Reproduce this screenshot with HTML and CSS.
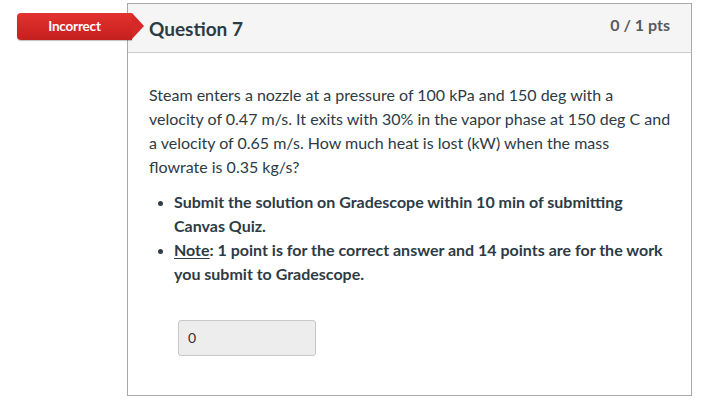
FILE: index.html
```html
<!DOCTYPE html>
<html>
<head>
<meta charset="utf-8">
<link rel="stylesheet" href="styles.css">
</head>
<body>
<div class="page">
  <div class="card">
    <div class="badge">Incorrect</div>
    <div class="header">
      <h2 class="title">Question 7</h2>
      <div class="pts">0 / 1 pts</div>
    </div>
    <div class="body">
      <p class="text">Steam enters a nozzle at a pressure of 100 kPa and 150 deg with a velocity of 0.47 m/s. It exits with 30% in the vapor phase at 150 deg C and a velocity of 0.65 m/s. How much heat is lost (kW) when the mass flowrate is 0.35 kg/s?</p>
      <ul class="list">
        <li>Submit the solution on Gradescope within 10 min of submitting Canvas Quiz.</li>
        <li><span class="u">Note</span>: 1 point is for the correct answer and 14 points are for the work you submit to Gradescope.</li>
      </ul>
      <div class="answer">0</div>
    </div>
  </div>
</div>
</body>
</html>
```

FILE: styles.css
```css
html, body {
  margin: 0;
  padding: 0;
  background: #ffffff;
}
body {
  font-family: Lato, "Liberation Sans", sans-serif;
  color: #2d3b45;
}
.page {
  padding: 3px 0 0 127px;
}
.card {
  position: relative;
  width: 563px;
  height: 391px;
  border: 1px solid #a9a9a9;
  box-sizing: content-box;
}
.badge {
  position: absolute;
  left: -111px;
  top: 9px;
  width: 115px;
  height: 27px;
  background: linear-gradient(#e3322f, #c41f1e);
  border-radius: 4px 0 0 4px;
  color: #fff;
  font-size: 13.5px;
  font-weight: 700;
  line-height: 26px;
  box-sizing: border-box;
  text-align: center;
  letter-spacing: -0.2px;
  box-shadow: 0 1px 1px rgba(0,0,0,0.25);
}
.badge::after {
  content: "";
  position: absolute;
  right: -12px;
  top: 0;
  border-top: 13.5px solid transparent;
  border-bottom: 13.5px solid transparent;
  border-left: 12px solid #d42927;
}
.header {
  display: flex;
  align-items: center;
  justify-content: space-between;
  height: 48px;
  background: #f5f5f5;
  border-bottom: 1px solid #c7cdd1;
  padding: 0 21px 0 21px;
}
.title {
  margin: 0;
  font-size: 19px;
  font-weight: 700;
  color: #2d3b45;
}
.pts {
  font-size: 16px;
  font-weight: 700;
  color: #555a5e;
  padding-bottom: 8px;
}
.body {
  padding: 30px 20px 0 21px;
  font-size: 16px;
  line-height: 24px;
}
.text {
  margin: 0;
}
.list {
  margin: 11px 0 0 0;
  padding-left: 25px;
  font-weight: 700;
}
.list li::marker {
  font-weight: 400;
  font-size: 14px;
}
.u {
  text-decoration: underline;
  text-underline-offset: 2px;
}
.answer {
  margin: 34px 0 0 29px;
  width: 138px;
  height: 36px;
  box-sizing: border-box;
  background: #ededed;
  border: 1px solid #c8c8c8;
  border-radius: 3px;
  font-size: 14px;
  line-height: 34px;
  padding-left: 9px;
  color: #333;
}
```
